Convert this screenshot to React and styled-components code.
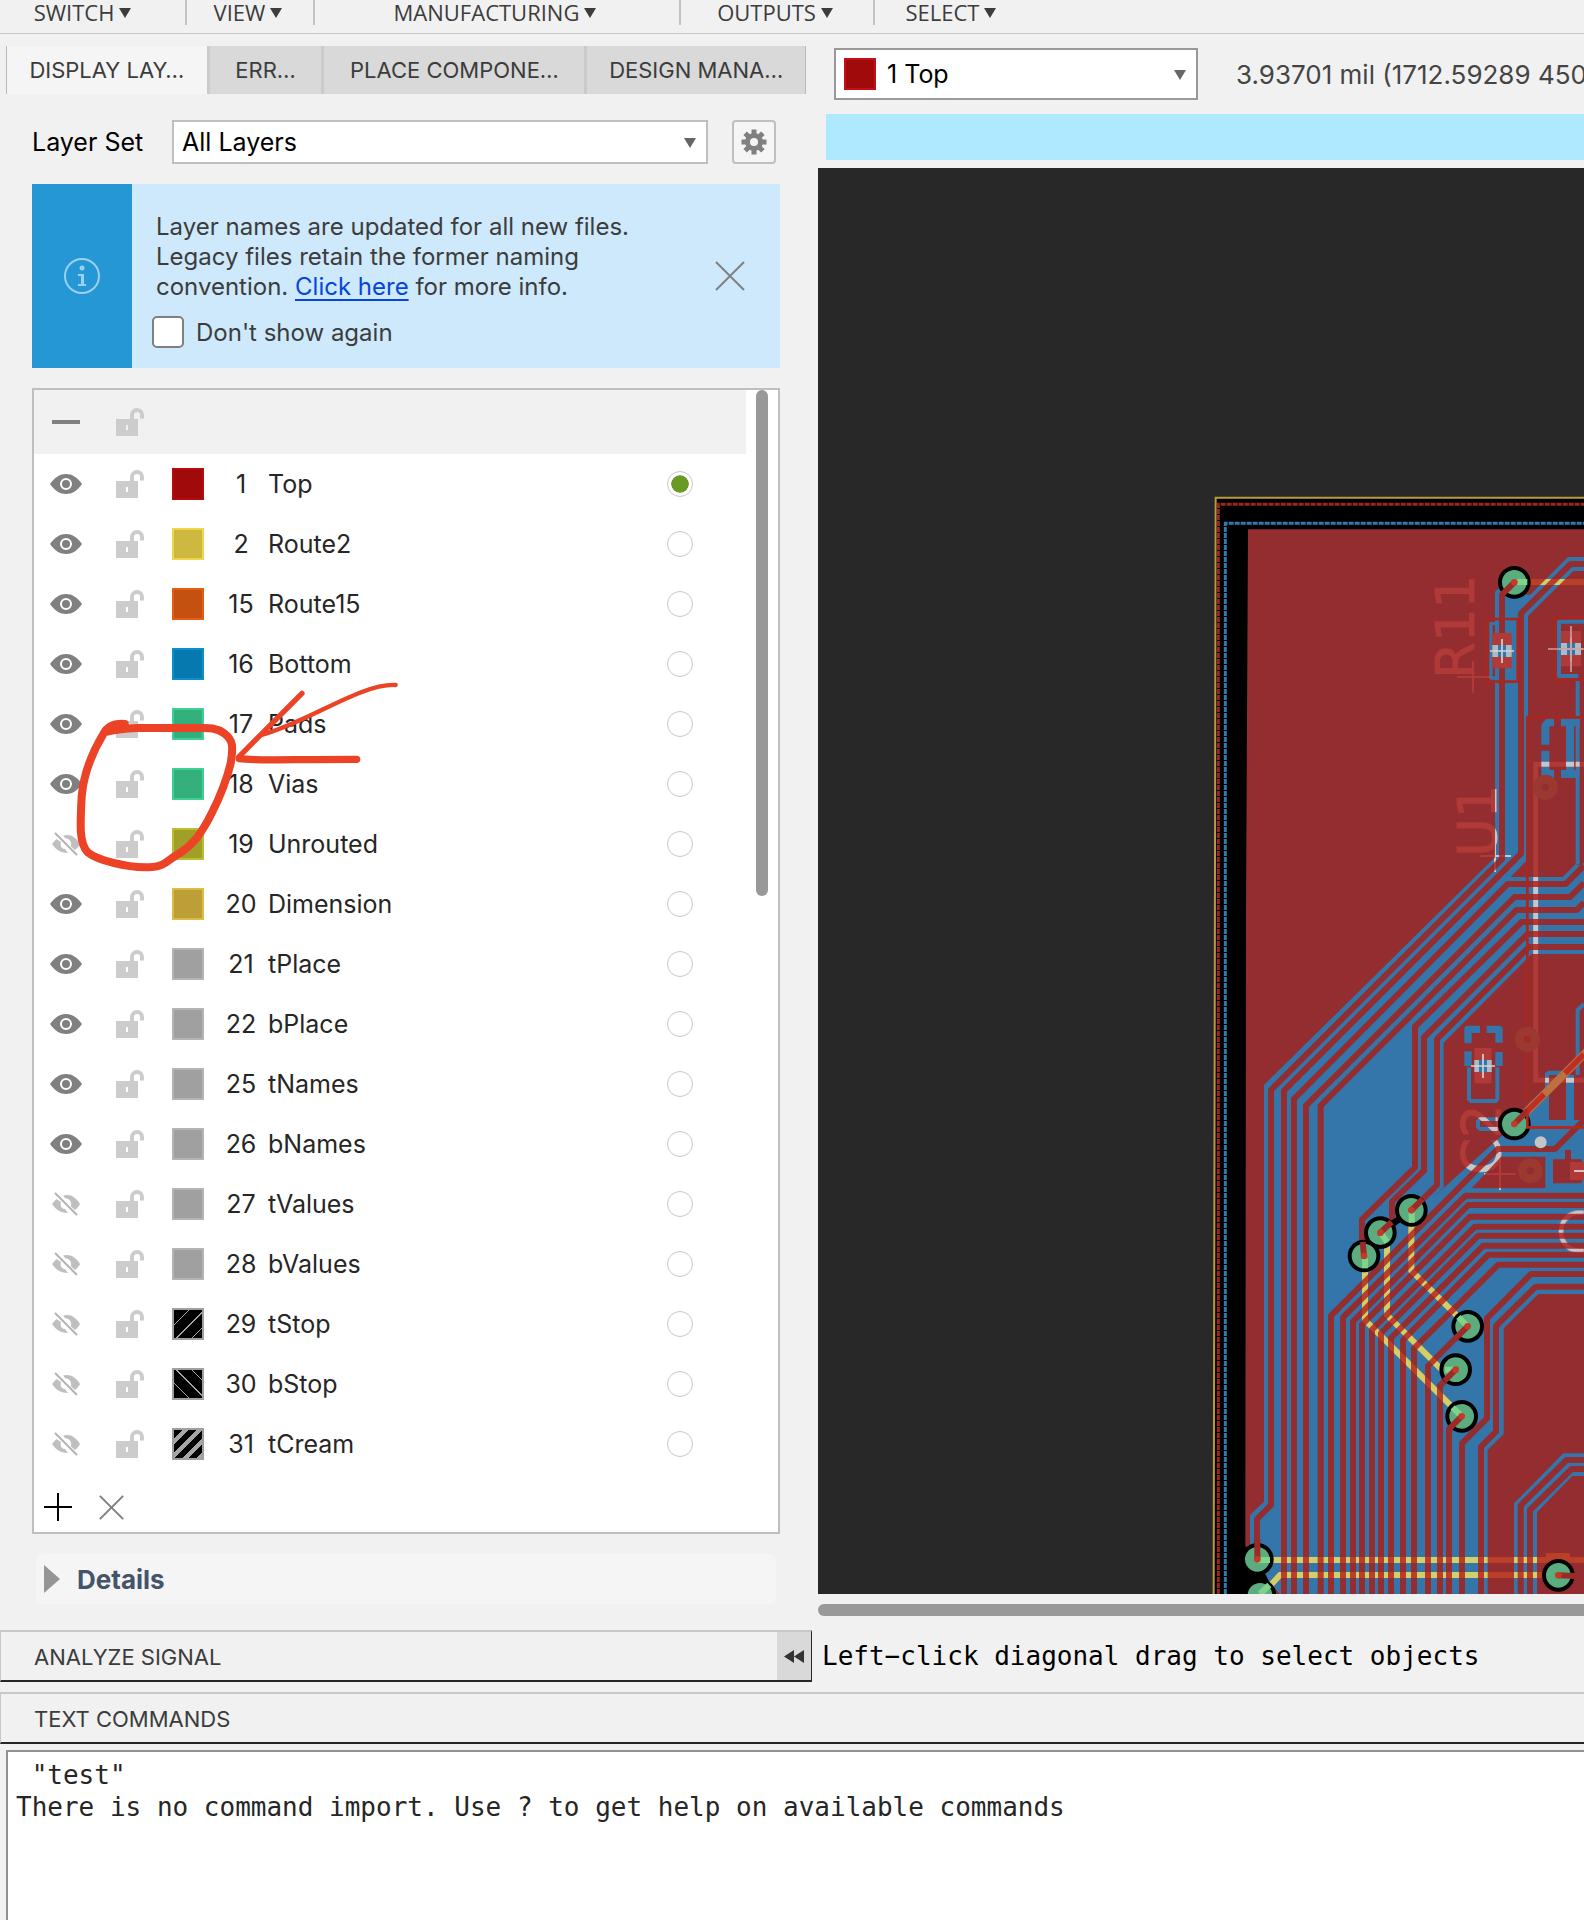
import React from 'react';
import styled, { createGlobalStyle } from 'styled-components';

const sans = `Inter, "Liberation Sans", sans-serif`;
const humanist = `"Open Sans", "Noto Sans", sans-serif`;
const mono = `"DejaVu Sans Mono", monospace`;

const GlobalStyle = createGlobalStyle`
  *, *::before, *::after { box-sizing: border-box; }
  body { margin: 0; background: #f1f1f1; color: #262626; font-family: ${sans}; font-size: 25px; }
  button, select, input { font: inherit; color: inherit; margin: 0; }
  button { padding: 0; border: 0; background: none; cursor: pointer; }
  svg { display: block; }
`;

const Page = styled.div`
  min-height: 100vh;
  display: flex;
  flex-direction: column;
`;

/* Menu bar */
const MenuBar = styled.nav`
  display: flex;
  height: 34px;
  border-bottom: 1px solid #c8c8c8;
`;
const MenuItem = styled.button`
  flex: 0 0 ${p => p.$width}px;
  display: flex;
  align-items: center;
  justify-content: center;
  gap: 5px;
  height: 25px;
  padding-right: ${p => (p.$first ? 20 : 4)}px;
  border-right: ${p => (p.$last ? 0 : 2)}px solid #c4c4c4;
  color: #3c3c3c;
  font-family: ${humanist};
  font-size: 22px;
  line-height: 25px;
`;

/* Main split */
const Workspace = styled.main`
  display: grid;
  grid-template-columns: 818px minmax(0, 1fr);
`;
const SidePanel = styled.aside`
  display: flex;
  flex-direction: column;
  padding-top: 12px;
`;
const Tabs = styled.div`
  display: flex;
  margin: 0 12px 0 6px;
  height: 48px;
  border: solid #b8b8b8;
  border-width: 0 1px;
`;
const Tab = styled.button`
  flex: ${p => p.$grow} 0 0;
  min-width: 0;
  background: ${p => (p.$active ? '#f5f5f5' : '#d9d9d9')};
  border-left: ${p => (p.$first ? 0 : 3)}px solid #cbcbcb;
  color: #3c3c3c;
  font-size: 22px;
  white-space: nowrap;
`;
const PanelBody = styled.div`
  padding: 26px 38px 26px 32px;
  display: flex;
  flex-direction: column;
`;
const LayerSetRow = styled.div`
  display: flex;
  align-items: center;
  height: 44px;
  color: #000;
`;
const LayerSetLabel = styled.label`
  flex: 0 0 140px;
`;
const SelectWrap = styled.div`
  position: relative;
  flex: ${p => p.$flex};
  > svg {
    position: absolute;
    right: 12px;
    top: 50%;
    margin-top: -4px;
    pointer-events: none;
  }
`;
const Select = styled.select`
  appearance: none;
  display: block;
  width: 100%;
  height: ${p => p.$height}px;
  padding: 0 32px 0 ${p => p.$indent}px;
  border: 2px solid ${p => p.$edge};
  border-radius: 0;
  background: #fff;
  color: #000;
`;
const GearButton = styled.button`
  display: grid;
  place-items: center;
  width: 44px;
  height: 44px;
  margin-left: 24px;
  margin-right: 4px;
  border: 2px solid #bfbfbf;
  border-radius: 4px;
  background: #f5f5f5;
`;

/* Notice */
const Notice = styled.section`
  display: flex;
  align-items: center;
  height: 184px;
  margin-top: 20px;
  background: #cde9fb;
  color: #3c3c3c;
`;
const NoticeIcon = styled.div`
  display: grid;
  place-items: center;
  align-self: stretch;
  flex: 0 0 100px;
  background: #2497d4;
`;
const NoticeText = styled.div`
  flex: 1;
  padding: 8px 0 0 24px;
  font-size: 24px;
`;
const NoticeCopy = styled.p`
  margin: 0;
  line-height: 30px;
`;
const NoticeLink = styled.a`
  color: #0645dc;
  text-decoration-thickness: 2px;
  text-underline-offset: 4px;
`;
const DontShow = styled.label`
  display: flex;
  align-items: center;
  gap: 12px;
  height: 32px;
  margin: 14px 0 0 -4px;
`;
const Checkbox = styled.input`
  appearance: none;
  width: 32px;
  height: 32px;
  border: 2px solid #808080;
  border-radius: 5px;
  background: #fff;
`;
const CloseButton = styled.button`
  margin-right: 35px;
`;

/* Layer list */
const LayerBox = styled.section`
  position: relative;
  margin-top: 20px;
  border: 2px solid #bfbfbf;
  background: #fff;
`;
const LayerScroll = styled.div`
  display: flex;
`;
const LayerTable = styled.table`
  flex: 1;
  table-layout: fixed;
  border-collapse: collapse;
  th, td { padding: 0; font-weight: 400; text-align: left; }
`;
const HeadRow = styled.tr`
  height: 64px;
  background: #f1f1f1;
`;
const LayerRow = styled.tr`
  height: 60px;
`;
const Col = styled.col`
  width: ${p => p.$width}px;
`;
const IconButton = styled.button`
  display: grid;
  place-items: center;
  width: 100%;
  height: 44px;
`;
const Swatch = styled.span`
  display: block;
  width: 32px;
  height: 32px;
  margin-left: 10px;
  border: 2px solid ${p => p.$edge};
  background: ${p => p.$fill};
`;
const NumberCell = styled.td`
  && { text-align: center; }
`;
const Radio = styled.input`
  appearance: none;
  display: block;
  width: 26px;
  height: 26px;
  margin: 0 auto;
  padding: 3px;
  border: 1px solid #c8c8c8;
  border-radius: 50%;
  background: #fff content-box;
  &:checked {
    background-color: #6a9a25;
    box-shadow: inset 0 0 0 3px #fff;
  }
`;
const ScrollTrack = styled.div`
  flex: 0 0 32px;
  padding-left: 10px;
`;
const ScrollThumb = styled.div`
  width: 12px;
  height: 506px;
  border-radius: 6px;
  background: #999;
`;
const LayerActions = styled.div`
  display: flex;
  align-items: center;
  gap: 27px;
  height: 58px;
  padding: 8px 0 0 10px;
`;
const Annotation = styled.svg`
  position: absolute;
  left: 0;
  top: 0;
  width: 400px;
  height: 520px;
  pointer-events: none;
`;
const DetailsButton = styled.button`
  display: flex;
  align-items: center;
  gap: 17px;
  height: 50px;
  margin: 20px 4px 0;
  padding-left: 8px;
  border-radius: 6px;
  background: #f5f5f5;
  color: #45546a;
  font-size: 26px;
  font-weight: 700;
`;
const SignalBar = styled.div`
  display: flex;
  align-items: stretch;
  height: 52px;
  margin-right: 6px;
  border: solid #c8c8c8;
  border-width: 2px 0 0 1px;
  border-right: 1px solid #262626;
  border-bottom: 2px solid #262626;
`;
const BarTitle = styled.h2`
  flex: 1;
  margin: 0;
  padding-left: 33px;
  color: #3c3c3c;
  font-size: 22px;
  font-weight: 400;
  line-height: 50px;
`;
const CollapseButton = styled.button`
  display: grid;
  place-items: center;
  width: 34px;
  background: #d9d9d9;
`;

/* Canvas side */
const CanvasSide = styled.section`
  display: flex;
  flex-direction: column;
  min-width: 0;
  overflow: hidden;
`;
const CanvasTools = styled.div`
  display: flex;
  align-items: center;
  gap: 38px;
  padding: 14px 0 14px 16px;
  white-space: nowrap;
`;
const ActiveSwatch = styled.span`
  position: absolute;
  left: 10px;
  top: 10px;
  width: 32px;
  height: 32px;
  border: 2px solid #c80d18;
  background: #a00a0a;
`;
const Coordinates = styled.output`
  color: #444;
  font-size: 26px;
`;
const HintBar = styled.div`
  height: 46px;
  margin: 0 0 8px 8px;
  background: #aee9ff;
`;
const Board = styled.svg`
  width: 100%;
  height: 1426px;
  background: #282828;
`;
const HScroll = styled.div`
  height: 12px;
  margin: 10px 0 25px;
  border-radius: 6px 0 0 6px;
  background: #999;
`;
const Status = styled.p`
  margin: 0;
  padding-left: 4px;
  color: #000;
  font-family: ${mono};
  font-size: 26px;
  line-height: 30px;
  white-space: nowrap;
`;

/* Console */
const CommandBar = styled.div`
  height: 52px;
  margin-top: 10px;
  border: solid #c8c8c8;
  border-width: 2px 0 0 1px;
  border-bottom: 2px solid #262626;
`;
const Console = styled.pre`
  flex: 1;
  margin: 6px 0 0 6px;
  padding: 7px 0 0 8px;
  border: solid #909090;
  border-width: 2px 0 0 2px;
  background: #fff;
  color: #262626;
  font-family: ${mono};
  font-size: 26px;
  line-height: 32px;
`;

const Caret = ({ color = '#3c3c3c' }) => (
  <svg width="12" height="10" viewBox="0 0 12 10" aria-hidden="true"><path d="M0 0H12L6 10Z" fill={color} /></svg>
);
const Eye = () => (
  <svg width="32" height="20" viewBox="0 0 32 20" aria-hidden="true">
    <path d="M0 10C5 3 10 0 16 0S27 3 32 10C27 17 22 20 16 20S5 17 0 10Z" fill="#808080" />
    <circle cx="16" cy="10" r="5" fill="#808080" stroke="#fff" strokeWidth="2" />
  </svg>
);
const EyeOff = () => (
  <svg width="28" height="24" viewBox="0 0 28 24" aria-hidden="true">
    <path d="M4.500 7L0 12C4 18 9 21 16 21L13 17C9 17 8 13 9 10Z" fill="#bfbfbf" />
    <path d="M11 3.500C18 1.500 24 5 28 12C26.500 15 25 16.500 23 18L19 14.500C20 9 17 6.500 13.500 6.500Z" fill="#bfbfbf" />
    <path d="M3 1L25 23" stroke="#b3b3b3" strokeWidth="2" />
  </svg>
);
const Lock = () => (
  <svg width="28" height="28" viewBox="0 0 28 28" aria-hidden="true">
    <path d="M0 11H22V28H0ZM10 17V22H12V17Z" fill="#ccc" fillRule="evenodd" />
    <path d="M16 12V7A5 5 0 0 1 26 7V10.500" fill="none" stroke="#ccc" strokeWidth="4" />
  </svg>
);
const Cross = ({ size }) => (
  <svg width={size} height={size} viewBox="0 0 30 30" aria-hidden="true">
    <path d="M1 1L29 29M29 1L1 29" stroke="#808080" strokeWidth="2" vectorEffect="non-scaling-stroke" />
  </svg>
);
const Gear = () => (
  <svg width="26" height="26" viewBox="-13 -13 26 26" aria-hidden="true">
    {[0, 45, 90, 135].map(a => (
      <rect key={a} x="-2.500" y="-12.500" width="5" height="25" fill="#808080" transform={`rotate(${a})`} />
    ))}
    <circle r="9" fill="#808080" />
    <circle r="4" fill="#f5f5f5" />
  </svg>
);

const stripe = (angle, line, gap) =>
  `repeating-linear-gradient(${angle}deg, #000 0 ${gap}px, #a6a6a6 ${gap}px ${gap + line}px)`;

const layers = [
  { n: 1, name: 'Top', on: true, fill: '#a00a0a', edge: '#b80a0c' },
  { n: 2, name: 'Route2', on: true, fill: '#cdb93f', edge: '#f0d648' },
  { n: 15, name: 'Route15', on: true, fill: '#c45110', edge: '#e65c14' },
  { n: 16, name: 'Bottom', on: true, fill: '#067aae', edge: '#0c90cc' },
  { n: 17, name: 'Pads', on: true, fill: '#33b07b', edge: '#3ed094' },
  { n: 18, name: 'Vias', on: true, fill: '#33b07b', edge: '#3ed094' },
  { n: 19, name: 'Unrouted', on: false, fill: '#a0a028', edge: '#bdbd30' },
  { n: 20, name: 'Dimension', on: true, fill: '#bd9f37', edge: '#e0bb42' },
  { n: 21, name: 'tPlace', on: true, fill: '#a0a0a0', edge: '#b4b4b4' },
  { n: 22, name: 'bPlace', on: true, fill: '#a0a0a0', edge: '#b4b4b4' },
  { n: 25, name: 'tNames', on: true, fill: '#a0a0a0', edge: '#b4b4b4' },
  { n: 26, name: 'bNames', on: true, fill: '#a0a0a0', edge: '#b4b4b4' },
  { n: 27, name: 'tValues', on: false, fill: '#a0a0a0', edge: '#b4b4b4' },
  { n: 28, name: 'bValues', on: false, fill: '#a0a0a0', edge: '#b4b4b4' },
  { n: 29, name: 'tStop', on: false, fill: stripe(135, 1, 10), edge: '#a0a0a0' },
  { n: 30, name: 'bStop', on: false, fill: stripe(45, 1, 10), edge: '#a0a0a0' },
  { n: 31, name: 'tCream', on: false, fill: stripe(135, 4, 6), edge: '#a0a0a0' },
];

const menus = [['SWITCH', 187], ['VIEW', 128], ['MANUFACTURING', 366], ['OUTPUTS', 194], ['SELECT', 156]];
const tabs = [['DISPLAY LAY…', 202], ['ERR…', 113], ['PLACE COMPONE…', 263], ['DESIGN MANA…', 220]];

/* Board drawing: three units per pixel */
const traces = [
  '943,307 906,345 906,1137 213,1830 213,3075 171,3117 171,3238',
  '1152,252 1112,252 963,400 963,1121 252,1832 252,3342',
  '1152,1157 1097,1212 923,1212 282,1857 282,3342',
  '1152,1209 1110,1251 944,1251 318,1877 318,3342',
  '1152,1268 1130,1290 949,1290 362,1877 362,3342',
  '1152,1326 965,1326 645,1640 645,2062 486,2218 486,2290 492,2328',
  '1152,1362 982,1362 672,1672 672,2072 576,2165 576,2225 541,2258',
  '1152,1401 987,1401 711,1677 711,2115 634,2192',
  '1152,1920 1065,2007 893,2007 393,2507 393,3342',
  '1152,2147 797,2147 429,2512 429,3342',
  '1152,2175 805,2175 459,2524 459,3342',
  '1152,2210 810,2210 486,2534 486,3342',
  '1152,2240 825,2240 516,2549 516,3342',
  '1152,2267 835,2267 543,2559 543,3342',
  '1152,2297 850,2297 573,2574 573,3342',
  '1152,2324 865,2324 609,2580 609,3342',
  '1152,2354 895,2354 642,2605 642,3342',
  '1152,2382 993,2382 861,2515 861,2815 786,2890 786,3342',
  '1152,2420 1007,2420 888,2538 888,2855 843,2900 843,3342',
  '803,2538 684,2658 684,3342',
  '768,2668 720,2717 720,3342',
  '785,2810 747,2847 747,3342',
  '1152,2940 1100,2940 962,3076 962,3342',
  '1152,2967 1115,2967 990,3090 990,3342',
  '943,1932 840,1932',
  '1152,3288 1075,3288',
];

const blueAreas = [
  '885,335 900,322 990,345 1104,231 1152,231 1152,273 1120,273 984,408 984,1138 932,1191 1088,1191 1127,1152 1139,1156 1152,1148 1152,1422 995,1422 731,1688 731,2122 700,2152 890,1980 915,1960 985,1870 1035,1832 1035,1780 1045,1772 1098,1772 1110,1785 1133,1785 1152,1785 1152,2442 1015,2442 911,2545 911,2862 863,2910 863,3342 240,3342 150,3240 150,3105 192,3065 192,1815 885,1132',
  '1152,2920 1090,2920 942,3070 942,3342 1011,3342 1011,3097 1117,2988 1152,2988',
];
const redIslands = [
  '815,2125 903,2030 1036,2030 1036,2125',
  '1047,1785 1098,1785 1098,1920 1047,1920',
  '1122,1785 1152,1785 1152,1920 1122,1920',
  '1059,2038 1095,2038 1095,2010 1113,2010 1113,2038 1146,2038 1146,2110 1059,2110',
];
const bluePaths = [
  ['M1133 600V1153', 12],
  ['M1152 1572L1133 1590V1785', 12],
  ['M1036 892V812M1036 794V738L1045 727H1062M1083 727H1139M1110 727V880M1036 870L1045 882H1062M1083 882H1130', 24],
  ['M897 431H873V594H897M915 431H943V594H915', 10],
  ['M1152 425H1077V588H1135', 12],
  ['M840 1648H804V1690M860 1648H897V1688M804 1714V1758M897 1716V1758', 22],
  ['M807 1762V1857L812 1863H888L892 1857V1762', 12],
  ['M893 1918H840L834 1924V1940L840 1947H893', 12],
];

const Copper = ({ red, blue }) => (
  <g fill="none" strokeLinejoin="round">
    <polygon points="144,148 1152,148 1152,3342 178,3342 150,3240 136,3195 138,1300" fill={red} />
    {blueAreas.map(p => <polygon key={p} points={p} fill={blue} />)}
    {bluePaths.map(([d, w]) => <path key={d} d={d} stroke={blue} strokeWidth={w} />)}
    {redIslands.map(p => <polygon key={p} points={p} fill={red} />)}
    {traces.map(p => <polyline key={p} points={p} stroke={red} strokeWidth="18" />)}
  </g>
);

const Inner = ({ color }) => (
  <g fill="none" stroke={color} strokeWidth="18">
    <path d="M943 306H1152M495 2340V2520L785 2809M541 2258L561 2280V2505L722 2666L767 2669M634 2195V2372L803 2539M172 3240H1152M180 3350L240 3285H1075" />
  </g>
);

const Silk = ({ color }) => (
  <g fill={color}>
    <path d="M1152 853H1007V1801H1152" fill="none" stroke={color} strokeWidth="15" />
    <path d="M771 591H868M819 543V638M840 1128H933M885 1050V1176M852 2082H948M900 2030V2130" stroke={color} strokeWidth="6" />
    <g fontFamily="DejaVu Sans" fontSize="158" stroke={color} strokeWidth="3">
      <text transform="translate(821 596) rotate(-90)">R11</text>
      <text transform="translate(887 1130) rotate(-90)">U1</text>
      <text transform="translate(900 2084) rotate(-90)">C2</text>
    </g>
    <path d="M1152 2199C1060 2185 1060 2325 1152 2311" fill="none" stroke={color} strokeWidth="14" />
  </g>
);

const vias = [
  [943, 307, -37, 37], [943, 1932, 40, -40], [634, 2191, 34, -34], [541, 2258, 34, -32], [492, 2328, -4, -42],
  [803, 2539, -37, 37], [767, 2669, -34, 34], [785, 2809, -36, 36], [172, 3238, 0, -60], [1075, 3286, 50, 2],
];

const Pcb = () => (
  <Board viewBox="-1146 -936 2298 4278" preserveAspectRatio="xMinYMin slice" role="img" aria-label="Circuit board">
    <defs>
      <mask id="gaps" maskUnits="userSpaceOnUse" x="0" y="0" width="1152" height="3342">
        <Copper red="#000" blue="#fff" />
      </mask>
    </defs>
    <polygon points="48,53 1152,53 1152,3342 42,3342" fill="#000" />
    <path d="M41 3342L47 53H1152" fill="none" stroke="#b89b40" strokeWidth="6" />
    <path d="M55 3342V73H1152" fill="none" stroke="#982820" strokeWidth="9" strokeDasharray="15 3" />
    <path d="M76 3342V130H1152" fill="none" stroke="#3678ad" strokeWidth="9" strokeDasharray="15 3" />
    <Copper red="#932d30" blue="#3476a9" />
    <path d="M1152 712H982V1942H1152M862 417H953V605H862ZM1152 412H1065V599H1152" fill="none" stroke="#a9271f" strokeWidth="8" />
    <Silk color="#b03a37" />
    <g mask="url(#gaps)"><Silk color="#c3c8cc" /></g>
    {[[1036, 922], [982, 1678], [991, 2072]].map(([x, y]) => (
      <circle key={y} cx={x} cy={y} r="24" fill="none" stroke="#9b382f" strokeWidth="27" />
    ))}
    {[[906, 513, 58], [1113, 507, 60], [849, 1758, 52]].map(([x, y, w]) => (
      <g key={x}>
        <rect x={x - w / 2} y={y - 54} width={w} height="106" fill="#b03a37" />
        <rect x={x - w / 2} y={y - 18} width={w} height="36" fill="#a9bcc8" />
        <rect x={x - 12} y={y - 18} width="24" height="36" fill="#3476a9" />
        <path d={`M${x - 36} ${y}H${x + 36}M${x} ${y - 36}V${y + 36}`} stroke="#d5d3d8" strokeWidth="5" />
      </g>
    ))}
    <path d="M1044 507H1152M1113 438V576" stroke="#c99ba0" strokeWidth="5" />
    <rect x="1110" y="2046" width="42" height="54" fill="#b03a37" />
    <path d="M1122 2073H1152" stroke="#ddd" strokeWidth="5" />
    <circle cx="1022" cy="1987" r="18" fill="#c3c6c9" />
    <Inner color="#b93f29" />
    <g mask="url(#gaps)"><Inner color="#d0cf6b" /></g>
    <path d="M943 1932L1160 1715" stroke="#bd7040" strokeWidth="24" />
    <path d="M943 1932L1032 1843M1095 1780L1152 1723" stroke="#bd2f22" strokeWidth="17" />
    <path d="M1038 3240V3219H1110V3240Z" fill="#b93f29" />
    <path d="M492 2328L541 2258L634 2191M172 3260V3342" stroke="#000" strokeWidth="20" fill="none" />
    <polygon points="81,3195 172,3238 200,3290 225,3342 81,3342" fill="#000" />
    {[...vias, [180, 3346, 0, 0]].map(([x, y]) => (
      <circle key={`${x}-${y}`} cx={x} cy={y} r="43" fill="#5bad80" stroke="#000" strokeWidth="12" />
    ))}
    <path d="M950 306H982M495 2335V2365M545 2263L561 2285M635 2195V2228M785 2809L758 2782M767 2669H735M803 2539L775 2511M172 3240H210M180 3342L208 3315" stroke="#7fd48c" strokeWidth="18" />
    {vias.map(([x, y, dx, dy]) => (
      <g key={`${x}-${y}`}>
        <path d={`M${x} ${y}l${dx} ${dy}`} stroke="#9d2a27" strokeWidth="18" />
        <circle cx={x} cy={y} r="10" fill="#c33b28" />
      </g>
    ))}
    <path d="M982 1895V1942H1152" fill="none" stroke="#b3281f" strokeWidth="8" />
  </Board>
);

const Markup = () => (
  <Annotation viewBox="42 30 1200 1560" aria-hidden="true">
    <g fill="none" stroke="#ec4226" strokeLinecap="round" strokeLinejoin="round">
      <path strokeWidth="24" d="M314 1032C290 1030 265 1034 250 1062C215 1120 190 1190 185 1250C180 1340 178 1390 203 1417C235 1442 320 1462 375 1462C430 1462 430 1450 470 1425C520 1395 545 1360 575 1300C605 1240 620 1200 632 1150C640 1100 640 1080 612 1060C585 1040 560 1044 530 1044H350C310 1046 280 1050 258 1056" />
      <path strokeWidth="16" d="M846 940L655 1132" />
      <path strokeWidth="22" d="M658 1136C700 1143 800 1138 1010 1138" />
      <path strokeWidth="13" d="M1127 915C1020 910 860 1030 720 1066" />
    </g>
  </Annotation>
);

export default function App() {
  return (
    <Page>
      <GlobalStyle />
      <MenuBar>
        {menus.map(([label, width], i) => (
          <MenuItem key={label} $width={width} $first={i === 0} $last={i === menus.length - 1}>
            {label}<Caret />
          </MenuItem>
        ))}
      </MenuBar>

      <Workspace>
        <SidePanel>
          <Tabs role="tablist">
            {tabs.map(([label, grow], i) => (
              <Tab key={label} role="tab" aria-selected={i === 0} $grow={grow} $active={i === 0} $first={i === 0}>{label}</Tab>
            ))}
          </Tabs>
          <PanelBody>
            <LayerSetRow>
              <LayerSetLabel htmlFor="layer-set">Layer Set</LayerSetLabel>
              <SelectWrap $flex="1">
                <Select id="layer-set" $height={44} $indent={8} $edge="#bfbfbf"><option>All Layers</option></Select>
                <Caret color="#666" />
              </SelectWrap>
              <GearButton aria-label="Layer settings"><Gear /></GearButton>
            </LayerSetRow>

            <Notice>
              <NoticeIcon>
                <svg width="36" height="36" viewBox="0 0 36 36" aria-hidden="true">
                  <circle cx="18" cy="18" r="17" fill="none" stroke="#9bd0ee" strokeWidth="2" />
                  <circle cx="18" cy="10" r="2.500" fill="#9bd0ee" />
                  <path d="M14 16H20V26H22V28H14V26H17V18H14Z" fill="#9bd0ee" />
                </svg>
              </NoticeIcon>
              <NoticeText>
                <NoticeCopy>
                  Layer names are updated for all new files.<br />
                  Legacy files retain the former naming<br />
                  convention. <NoticeLink href="#layers">Click here</NoticeLink> for more info.
                </NoticeCopy>
                <DontShow><Checkbox type="checkbox" />Don't show again</DontShow>
              </NoticeText>
              <CloseButton aria-label="Close"><Cross size={30} /></CloseButton>
            </Notice>

            <LayerBox>
              <LayerScroll>
                <LayerTable>
                  <colgroup>
                    <Col $width={64} /><Col $width={64} /><Col $width={52} /><Col $width={54} /><col /><Col $width={132} />
                  </colgroup>
                  <thead>
                    <HeadRow>
                      <th>
                        <IconButton aria-label="Toggle all visibility">
                          <svg width="28" height="4" viewBox="0 0 28 4"><path d="M0 2H28" stroke="#808080" strokeWidth="4" /></svg>
                        </IconButton>
                      </th>
                      <th><IconButton aria-label="Toggle all locks"><Lock /></IconButton></th>
                      <th colSpan={4} />
                    </HeadRow>
                  </thead>
                  <tbody>
                    {layers.map(l => (
                      <LayerRow key={l.n}>
                        <td><IconButton aria-label={`Visibility of ${l.name}`}>{l.on ? <Eye /> : <EyeOff />}</IconButton></td>
                        <td><IconButton aria-label={`Lock ${l.name}`}><Lock /></IconButton></td>
                        <td><Swatch $fill={l.fill} $edge={l.edge} /></td>
                        <NumberCell>{l.n}</NumberCell>
                        <td><label htmlFor={`layer-${l.n}`}>{l.name}</label></td>
                        <td><Radio type="radio" name="layer" id={`layer-${l.n}`} defaultChecked={l.n === 1} /></td>
                      </LayerRow>
                    ))}
                  </tbody>
                </LayerTable>
                <ScrollTrack><ScrollThumb /></ScrollTrack>
              </LayerScroll>
              <LayerActions>
                <button aria-label="Add layer">
                  <svg width="28" height="28" viewBox="0 0 28 28"><path d="M14 0V28M0 14H28" stroke="#000" strokeWidth="2" /></svg>
                </button>
                <button aria-label="Remove layer"><Cross size={25} /></button>
              </LayerActions>
              <Markup />
            </LayerBox>

            <DetailsButton>
              <svg width="16" height="28" viewBox="0 0 16 28"><path d="M0 0L16 14L0 28Z" fill="#959595" /></svg>
              Details
            </DetailsButton>
          </PanelBody>
          <SignalBar>
            <BarTitle>ANALYZE SIGNAL</BarTitle>
            <CollapseButton aria-label="Collapse panel">
              <svg width="20" height="13" viewBox="0 0 20 13"><path d="M10 0V13L0 6.500ZM20 0V13L10 6.500Z" fill="#333" /></svg>
            </CollapseButton>
          </SignalBar>
        </SidePanel>

        <CanvasSide>
          <CanvasTools>
            <SelectWrap $flex="0 0 364px">
              <Select aria-label="Active layer" $height={52} $indent={51} $edge="#999"><option>1 Top</option></Select>
              <ActiveSwatch />
              <Caret color="#666" />
            </SelectWrap>
            <Coordinates>3.93701 mil (1712.59289 450</Coordinates>
          </CanvasTools>
          <HintBar />
          <Pcb />
          <HScroll />
          <Status>Left−click diagonal drag to select objects</Status>
        </CanvasSide>
      </Workspace>

      <CommandBar><BarTitle>TEXT COMMANDS</BarTitle></CommandBar>
      <Console>{' "test"\nThere is no command import. Use ? to get help on available commands'}</Console>
    </Page>
  );
}
